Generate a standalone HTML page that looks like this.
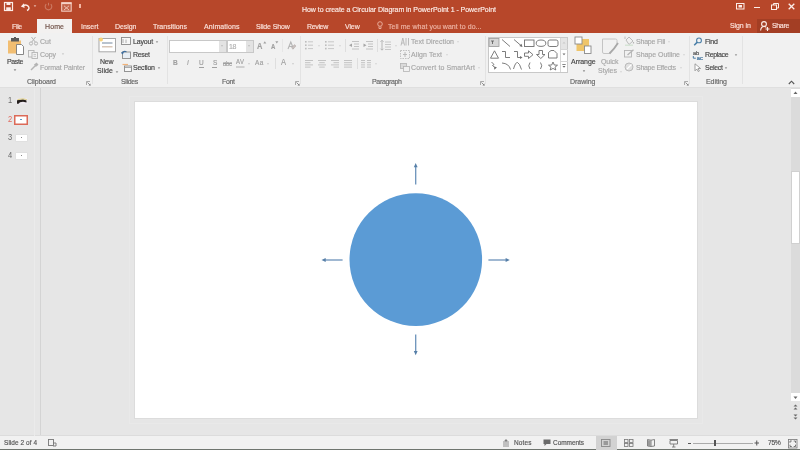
<!DOCTYPE html>
<html><head><meta charset="utf-8"><style>
html,body{margin:0;padding:0;width:800px;height:450px;overflow:hidden;background:#E6E6E6;}
.t{position:absolute;white-space:nowrap;font-family:"Liberation Sans",sans-serif;}
.r{position:absolute;}
svg{overflow:visible}
</style></head><body>
<div class="r" style="left:0px;top:0px;width:800px;height:33px;background:#B7472A;"></div>
<div class="r" style="left:757px;top:19px;width:43px;height:14px;background:#A33E24;"></div>
<div class="r" style="left:37px;top:18.5px;width:35px;height:14.5px;background:#F3F1F0;"></div>
<div class="t" style="left:302.00px;top:6.37px;font-size:7px;line-height:7px;letter-spacing:-0.041px;color:#FCEDE8;-webkit-text-stroke:0.15px #FCEDE8;transform-origin:0 5.93px;transform:scaleY(1.12);will-change:transform;">How to create a Circular Diagram in PowerPoint 1 - PowerPoint</div>
<div class="t" style="left:12.00px;top:22.67px;font-size:7px;line-height:7px;letter-spacing:-0.350px;color:#FBE3DC;-webkit-text-stroke:0.15px #FBE3DC;transform-origin:0 5.93px;transform:scaleY(1.12);will-change:transform;">File</div>
<div class="t" style="left:80.50px;top:22.67px;font-size:7px;line-height:7px;letter-spacing:-0.001px;color:#FBE3DC;-webkit-text-stroke:0.15px #FBE3DC;transform-origin:0 5.93px;transform:scaleY(1.12);will-change:transform;">Insert</div>
<div class="t" style="left:114.50px;top:22.67px;font-size:7px;line-height:7px;letter-spacing:-0.058px;color:#FBE3DC;-webkit-text-stroke:0.15px #FBE3DC;transform-origin:0 5.93px;transform:scaleY(1.12);will-change:transform;">Design</div>
<div class="t" style="left:153.00px;top:22.67px;font-size:7px;line-height:7px;letter-spacing:0.003px;color:#FBE3DC;-webkit-text-stroke:0.15px #FBE3DC;transform-origin:0 5.93px;transform:scaleY(1.12);will-change:transform;">Transitions</div>
<div class="t" style="left:204.00px;top:22.67px;font-size:7px;line-height:7px;letter-spacing:0.097px;color:#FBE3DC;-webkit-text-stroke:0.15px #FBE3DC;transform-origin:0 5.93px;transform:scaleY(1.12);will-change:transform;">Animations</div>
<div class="t" style="left:256.30px;top:22.67px;font-size:7px;line-height:7px;letter-spacing:-0.147px;color:#FBE3DC;-webkit-text-stroke:0.15px #FBE3DC;transform-origin:0 5.93px;transform:scaleY(1.12);will-change:transform;">Slide Show</div>
<div class="t" style="left:307.00px;top:22.67px;font-size:7px;line-height:7px;letter-spacing:-0.350px;color:#FBE3DC;-webkit-text-stroke:0.15px #FBE3DC;transform-origin:0 5.93px;transform:scaleY(1.12);will-change:transform;">Review</div>
<div class="t" style="left:345.30px;top:22.67px;font-size:7px;line-height:7px;letter-spacing:-0.115px;color:#FBE3DC;-webkit-text-stroke:0.15px #FBE3DC;transform-origin:0 5.93px;transform:scaleY(1.12);will-change:transform;">View</div>
<div class="t" style="left:44.50px;top:22.67px;font-size:7px;line-height:7px;letter-spacing:0.109px;color:#6E4F45;-webkit-text-stroke:0.15px #6E4F45;transform-origin:0 5.93px;transform:scaleY(1.12);will-change:transform;">Home</div>
<div class="t" style="left:387.50px;top:22.67px;font-size:7px;line-height:7px;letter-spacing:0.044px;color:#EDB3A3;-webkit-text-stroke:0.15px #EDB3A3;transform-origin:0 5.93px;transform:scaleY(1.12);will-change:transform;">Tell me what you want to do...</div>
<div class="t" style="left:729.80px;top:22.37px;font-size:7px;line-height:7px;letter-spacing:-0.101px;color:#FBE3DC;-webkit-text-stroke:0.15px #FBE3DC;transform-origin:0 5.93px;transform:scaleY(1.12);will-change:transform;">Sign in</div>
<div class="t" style="left:772.00px;top:22.37px;font-size:7px;line-height:7px;letter-spacing:-0.350px;color:#FBE3DC;-webkit-text-stroke:0.15px #FBE3DC;transform-origin:0 5.93px;transform:scaleY(1.12);will-change:transform;">Share</div>
<div class="r" style="left:0px;top:33px;width:800px;height:54px;background:#F1F1F1;"></div>
<div class="r" style="left:0px;top:86.5px;width:800px;height:1px;background:#DFDFDF;"></div>
<div class="r" style="left:92px;top:36px;width:1px;height:48px;background:#E3E3E3;"></div>
<div class="r" style="left:166.5px;top:36px;width:1px;height:48px;background:#E3E3E3;"></div>
<div class="r" style="left:299.5px;top:36px;width:1px;height:48px;background:#E3E3E3;"></div>
<div class="r" style="left:484.5px;top:36px;width:1px;height:48px;background:#E3E3E3;"></div>
<div class="r" style="left:688.5px;top:36px;width:1px;height:48px;background:#E3E3E3;"></div>
<div class="r" style="left:742px;top:36px;width:1px;height:48px;background:#E3E3E3;"></div>
<div class="t" style="left:6.70px;top:57.87px;font-size:7px;line-height:7px;letter-spacing:-0.350px;color:#444444;-webkit-text-stroke:0.15px #444444;transform-origin:0 5.93px;transform:scaleY(1.12);will-change:transform;">Paste</div>
<div class="t" style="left:39.70px;top:38.27px;font-size:7px;line-height:7px;letter-spacing:0.053px;color:#A6A6A6;-webkit-text-stroke:0.15px #A6A6A6;transform-origin:0 5.93px;transform:scaleY(1.12);will-change:transform;">Cut</div>
<div class="t" style="left:40.00px;top:51.27px;font-size:7px;line-height:7px;letter-spacing:-0.114px;color:#A6A6A6;-webkit-text-stroke:0.15px #A6A6A6;transform-origin:0 5.93px;transform:scaleY(1.12);will-change:transform;">Copy</div>
<div class="t" style="left:40.00px;top:64.27px;font-size:7px;line-height:7px;letter-spacing:-0.099px;color:#A6A6A6;-webkit-text-stroke:0.15px #A6A6A6;transform-origin:0 5.93px;transform:scaleY(1.12);will-change:transform;">Format Painter</div>
<div class="t" style="left:100.40px;top:58.27px;font-size:7px;line-height:7px;letter-spacing:-0.202px;color:#444444;-webkit-text-stroke:0.15px #444444;transform-origin:0 5.93px;transform:scaleY(1.12);will-change:transform;">New</div>
<div class="t" style="left:97.00px;top:67.27px;font-size:7px;line-height:7px;letter-spacing:0.109px;color:#444444;-webkit-text-stroke:0.15px #444444;transform-origin:0 5.93px;transform:scaleY(1.12);will-change:transform;">Slide</div>
<div class="t" style="left:132.70px;top:38.27px;font-size:7px;line-height:7px;letter-spacing:-0.143px;color:#444444;-webkit-text-stroke:0.15px #444444;transform-origin:0 5.93px;transform:scaleY(1.12);will-change:transform;">Layout</div>
<div class="t" style="left:133.00px;top:51.27px;font-size:7px;line-height:7px;letter-spacing:-0.350px;color:#444444;-webkit-text-stroke:0.15px #444444;transform-origin:0 5.93px;transform:scaleY(1.12);will-change:transform;">Reset</div>
<div class="t" style="left:133.00px;top:64.27px;font-size:7px;line-height:7px;letter-spacing:-0.225px;color:#444444;-webkit-text-stroke:0.15px #444444;transform-origin:0 5.93px;transform:scaleY(1.12);will-change:transform;">Section</div>
<div class="t" style="left:411.00px;top:38.27px;font-size:7px;line-height:7px;letter-spacing:0.046px;color:#A6A6A6;-webkit-text-stroke:0.15px #A6A6A6;transform-origin:0 5.93px;transform:scaleY(1.12);will-change:transform;">Text Direction</div>
<div class="t" style="left:411.00px;top:51.27px;font-size:7px;line-height:7px;letter-spacing:0.086px;color:#A6A6A6;-webkit-text-stroke:0.15px #A6A6A6;transform-origin:0 5.93px;transform:scaleY(1.12);will-change:transform;">Align Text</div>
<div class="t" style="left:411.00px;top:64.27px;font-size:7px;line-height:7px;letter-spacing:0.119px;color:#A6A6A6;-webkit-text-stroke:0.15px #A6A6A6;transform-origin:0 5.93px;transform:scaleY(1.12);will-change:transform;">Convert to SmartArt</div>
<div class="t" style="left:571.00px;top:58.27px;font-size:7px;line-height:7px;letter-spacing:-0.034px;color:#444444;-webkit-text-stroke:0.15px #444444;transform-origin:0 5.93px;transform:scaleY(1.12);will-change:transform;">Arrange</div>
<div class="t" style="left:601.00px;top:58.27px;font-size:7px;line-height:7px;letter-spacing:-0.098px;color:#A6A6A6;-webkit-text-stroke:0.15px #A6A6A6;transform-origin:0 5.93px;transform:scaleY(1.12);will-change:transform;">Quick</div>
<div class="t" style="left:598.00px;top:67.27px;font-size:7px;line-height:7px;letter-spacing:-0.012px;color:#A6A6A6;-webkit-text-stroke:0.15px #A6A6A6;transform-origin:0 5.93px;transform:scaleY(1.12);will-change:transform;">Styles</div>
<div class="t" style="left:635.70px;top:38.27px;font-size:7px;line-height:7px;letter-spacing:-0.203px;color:#A6A6A6;-webkit-text-stroke:0.15px #A6A6A6;transform-origin:0 5.93px;transform:scaleY(1.12);will-change:transform;">Shape Fill</div>
<div class="t" style="left:636.00px;top:51.27px;font-size:7px;line-height:7px;letter-spacing:-0.030px;color:#A6A6A6;-webkit-text-stroke:0.15px #A6A6A6;transform-origin:0 5.93px;transform:scaleY(1.12);will-change:transform;">Shape Outline</div>
<div class="t" style="left:636.00px;top:64.27px;font-size:7px;line-height:7px;letter-spacing:-0.288px;color:#A6A6A6;-webkit-text-stroke:0.15px #A6A6A6;transform-origin:0 5.93px;transform:scaleY(1.12);will-change:transform;">Shape Effects</div>
<div class="t" style="left:704.70px;top:38.27px;font-size:7px;line-height:7px;letter-spacing:-0.272px;color:#444444;-webkit-text-stroke:0.15px #444444;transform-origin:0 5.93px;transform:scaleY(1.12);will-change:transform;">Find</div>
<div class="t" style="left:704.70px;top:51.27px;font-size:7px;line-height:7px;letter-spacing:-0.347px;color:#444444;-webkit-text-stroke:0.15px #444444;transform-origin:0 5.93px;transform:scaleY(1.12);will-change:transform;">Replace</div>
<div class="t" style="left:704.70px;top:64.27px;font-size:7px;line-height:7px;letter-spacing:-0.291px;color:#444444;-webkit-text-stroke:0.15px #444444;transform-origin:0 5.93px;transform:scaleY(1.12);will-change:transform;">Select</div>
<div class="t" style="left:27.00px;top:78.37px;font-size:7px;line-height:7px;letter-spacing:-0.120px;color:#666666;-webkit-text-stroke:0.15px #666666;transform-origin:0 5.93px;transform:scaleY(1.12);will-change:transform;">Clipboard</div>
<div class="t" style="left:121.00px;top:78.37px;font-size:7px;line-height:7px;letter-spacing:-0.350px;color:#666666;-webkit-text-stroke:0.15px #666666;transform-origin:0 5.93px;transform:scaleY(1.12);will-change:transform;">Slides</div>
<div class="t" style="left:222.00px;top:78.37px;font-size:7px;line-height:7px;letter-spacing:-0.336px;color:#666666;-webkit-text-stroke:0.15px #666666;transform-origin:0 5.93px;transform:scaleY(1.12);will-change:transform;">Font</div>
<div class="t" style="left:372.00px;top:78.37px;font-size:7px;line-height:7px;letter-spacing:-0.336px;color:#666666;-webkit-text-stroke:0.15px #666666;transform-origin:0 5.93px;transform:scaleY(1.12);will-change:transform;">Paragraph</div>
<div class="t" style="left:569.50px;top:78.37px;font-size:7px;line-height:7px;letter-spacing:-0.029px;color:#666666;-webkit-text-stroke:0.15px #666666;transform-origin:0 5.93px;transform:scaleY(1.12);will-change:transform;">Drawing</div>
<div class="t" style="left:705.50px;top:78.37px;font-size:7px;line-height:7px;letter-spacing:-0.067px;color:#666666;-webkit-text-stroke:0.15px #666666;transform-origin:0 5.93px;transform:scaleY(1.12);will-change:transform;">Editing</div>
<div class="r" style="left:0px;top:88px;width:800px;height:348px;background:#E6E6E6;"></div>
<div class="r" style="left:40px;top:88px;width:1px;height:348px;background:#D4D4D4;"></div>
<div class="r" style="left:135px;top:102px;width:562px;height:316px;background:#FFFFFF;box-shadow:0 0 0 1px #DCDCDC, 0 0 0 5px #E6E6E6, 0 0 0 6px #E9E9E9;"></div>
<div class="r" style="left:0px;top:436px;width:800px;height:14px;background:#F1F1F1;"></div>
<div class="r" style="left:0px;top:434.5px;width:800px;height:1.5px;background:#DCDCDC;"></div>
<div class="r" style="left:0px;top:448.5px;width:800px;height:1.5px;background:#6E746E;"></div>
<div class="t" style="left:4.00px;top:440.49px;font-size:6.5px;line-height:6.5px;letter-spacing:0.043px;color:#555;-webkit-text-stroke:0.15px #555;transform-origin:0 5.51px;transform:scaleY(1.12);will-change:transform;">Slide 2 of 4</div>
<div class="t" style="left:513.60px;top:440.29px;font-size:6.5px;line-height:6.5px;letter-spacing:0.105px;color:#555;-webkit-text-stroke:0.15px #555;transform-origin:0 5.51px;transform:scaleY(1.12);will-change:transform;">Notes</div>
<div class="t" style="left:553.00px;top:440.29px;font-size:6.5px;line-height:6.5px;letter-spacing:-0.061px;color:#555;-webkit-text-stroke:0.15px #555;transform-origin:0 5.51px;transform:scaleY(1.12);will-change:transform;">Comments</div>
<div class="t" style="left:768.00px;top:440.04px;font-size:6.8px;line-height:6.8px;letter-spacing:-0.350px;color:#555;-webkit-text-stroke:0.15px #555;transform-origin:0 5.76px;transform:scaleY(1.12);will-change:transform;">75%</div>
<svg class="r" style="left:4px;top:2px" width="10" height="9" viewBox="0 0 10 9"><rect x="0.5" y="0.5" width="8" height="8" fill="none" stroke="#FCEDE8" stroke-width="1.2"/><rect x="2.5" y="0.5" width="4" height="2.5" fill="#FCEDE8"/><rect x="2.2" y="5.3" width="4.6" height="3.2" fill="#FCEDE8"/></svg>
<svg class="r" style="left:20px;top:2px" width="11" height="9" viewBox="0 0 11 9"><path d="M2.5 4.2 Q6 1.5 8.5 4.5 Q10 7 7 8.5" fill="none" stroke="#FCEDE8" stroke-width="1.4"/><path d="M0.8 4.5 L4 1.2 L4.6 6 Z" fill="#FCEDE8"/></svg>
<svg class="r" style="left:32.5px;top:5px" width="4" height="3" viewBox="0 0 4 3"><path d="M0.7 0.5 L3.3 0.5 L2 1.8 Z" fill="#FCEDE8"/></svg>
<svg class="r" style="left:44px;top:2px" width="9" height="9" viewBox="0 0 9 9"><path d="M2.2 2.2 A3.3 3.3 0 1 0 6.8 2.2" fill="none" stroke="#CC7A63" stroke-width="1.1"/><path d="M4.5 0.8 L4.5 3.5" stroke="#CC7A63" stroke-width="1"/></svg>
<svg class="r" style="left:61px;top:1.5px" width="11" height="10" viewBox="0 0 11 10"><rect x="0.7" y="0.7" width="9.5" height="8.5" fill="#C4634A" stroke="#F6D2C6" stroke-width="1"/><rect x="0.5" y="0.5" width="10" height="1.6" fill="#F6D2C6"/><path d="M3 3.8 L8 8 M8 3.8 L3 8" stroke="#EFC2B2" stroke-width="1"/></svg>
<div class="r" style="left:78.8px;top:4px;width:2.4px;height:4px;background:#F3B6A2;"></div>
<svg class="r" style="left:736px;top:3px" width="9" height="7" viewBox="0 0 9 7"><rect x="0.5" y="0.5" width="7.5" height="5.5" fill="none" stroke="#FCEDE8" stroke-width="1"/><rect x="2.5" y="2" width="3.5" height="2.5" fill="#FCEDE8"/></svg>
<div class="r" style="left:754px;top:7px;width:6px;height:1.2px;background:#FCEDE8;"></div>
<svg class="r" style="left:771px;top:3px" width="8" height="7" viewBox="0 0 8 7"><rect x="0.5" y="2" width="5" height="4.5" fill="none" stroke="#FCEDE8" stroke-width="1"/><path d="M2.5 2 L2.5 0.5 L7.5 0.5 L7.5 5 L5.5 5" fill="none" stroke="#FCEDE8" stroke-width="1"/></svg>
<svg class="r" style="left:788px;top:3px" width="7" height="7" viewBox="0 0 7 7"><path d="M0.7 0.7 L6.3 6.3 M6.3 0.7 L0.7 6.3" stroke="#FCEDE8" stroke-width="1.3"/></svg>
<svg class="r" style="left:377px;top:21px" width="6" height="9" viewBox="0 0 6 9"><circle cx="3" cy="3" r="2.3" fill="none" stroke="#EDB3A3" stroke-width="0.9"/><path d="M2 5.5 L2 7.5 L4 7.5 L4 5.5" fill="none" stroke="#EDB3A3" stroke-width="0.9"/></svg>
<svg class="r" style="left:760px;top:21px" width="10" height="10" viewBox="0 0 10 10"><circle cx="4" cy="3" r="2.4" fill="none" stroke="#FCEDE8" stroke-width="1.1"/><path d="M0.6 9.5 Q1 5.5 4 5.5 Q5.5 5.5 6.3 6.3" fill="none" stroke="#FCEDE8" stroke-width="1.1"/><path d="M7.5 6 L7.5 10 M5.5 8 L9.5 8" stroke="#FCEDE8" stroke-width="1.1"/></svg>
<svg class="r" style="left:7px;top:37px" width="18" height="19" viewBox="0 0 18 19"><rect x="1" y="3.5" width="13" height="13" fill="#F2BE72"/><rect x="4" y="1" width="8" height="3.5" fill="#5A5A5A"/><rect x="7" y="0" width="2" height="1.5" fill="#5A5A5A"/><path d="M9.5 7.5 L14.5 7.5 L16.5 9.5 L16.5 17.5 L9.5 17.5 Z" fill="#FFFFFF" stroke="#7A7A7A" stroke-width="0.9"/></svg>
<svg class="r" style="left:12.5px;top:69px" width="4" height="3" viewBox="0 0 4 3"><path d="M0.7 0.5 L3.3 0.5 L2 1.8 Z" fill="#555"/></svg>
<svg class="r" style="left:29px;top:37px" width="9" height="9" viewBox="0 0 9 9"><circle cx="2" cy="6.5" r="1.6" fill="none" stroke="#B4B4B4" stroke-width="1"/><circle cx="7" cy="6.5" r="1.6" fill="none" stroke="#B4B4B4" stroke-width="1"/><path d="M2.8 5 L6.5 0 M6.2 5 L2.5 0" stroke="#B4B4B4" stroke-width="1"/></svg>
<svg class="r" style="left:28px;top:50px" width="11" height="9" viewBox="0 0 11 9"><rect x="0.5" y="0.5" width="5.5" height="6.5" fill="none" stroke="#B4B4B4" stroke-width="0.9"/><rect x="4" y="2.5" width="5.5" height="6" fill="#F1F1F1" stroke="#B4B4B4" stroke-width="0.9"/><path d="M5.5 4.5 L8 4.5 M5.5 6.3 L8 6.3" stroke="#B4B4B4" stroke-width="0.7"/></svg>
<svg class="r" style="left:61px;top:52.5px" width="4" height="3" viewBox="0 0 4 3"><path d="M0.8 0.5 L3.2 0.5 L2 1.7 Z" fill="#B8B8B8"/></svg>
<svg class="r" style="left:30px;top:63px" width="9" height="8" viewBox="0 0 9 8"><path d="M1 7 L5 3" stroke="#B4B4B4" stroke-width="1.5"/><rect x="4.5" y="0.5" width="3.5" height="3" transform="rotate(-40 6 2)" fill="#B4B4B4"/></svg>
<svg class="r" style="left:86px;top:80.5px" width="5" height="5" viewBox="0 0 5 5"><path d="M0.5 0.5 L4 0.5 M0.5 0.5 L0.5 4" stroke="#9A9A9A" stroke-width="0.8"/><path d="M1.5 1.5 L4.3 4.3" stroke="#7A7A7A" stroke-width="0.8"/><path d="M4.5 2.5 L4.5 4.5 L2.5 4.5 Z" fill="#7A7A7A"/></svg>
<svg class="r" style="left:295px;top:80.5px" width="5" height="5" viewBox="0 0 5 5"><path d="M0.5 0.5 L4 0.5 M0.5 0.5 L0.5 4" stroke="#9A9A9A" stroke-width="0.8"/><path d="M1.5 1.5 L4.3 4.3" stroke="#7A7A7A" stroke-width="0.8"/><path d="M4.5 2.5 L4.5 4.5 L2.5 4.5 Z" fill="#7A7A7A"/></svg>
<svg class="r" style="left:480px;top:80.5px" width="5" height="5" viewBox="0 0 5 5"><path d="M0.5 0.5 L4 0.5 M0.5 0.5 L0.5 4" stroke="#9A9A9A" stroke-width="0.8"/><path d="M1.5 1.5 L4.3 4.3" stroke="#7A7A7A" stroke-width="0.8"/><path d="M4.5 2.5 L4.5 4.5 L2.5 4.5 Z" fill="#7A7A7A"/></svg>
<svg class="r" style="left:684px;top:80.5px" width="5" height="5" viewBox="0 0 5 5"><path d="M0.5 0.5 L4 0.5 M0.5 0.5 L0.5 4" stroke="#9A9A9A" stroke-width="0.8"/><path d="M1.5 1.5 L4.3 4.3" stroke="#7A7A7A" stroke-width="0.8"/><path d="M4.5 2.5 L4.5 4.5 L2.5 4.5 Z" fill="#7A7A7A"/></svg>
<svg class="r" style="left:98px;top:37px" width="19" height="16" viewBox="0 0 19 16"><rect x="1" y="1.5" width="16.5" height="13.3" fill="#FFFFFF" stroke="#A8A8A8" stroke-width="1"/><rect x="4" y="5" width="10.5" height="2" fill="#B9C3CE"/><rect x="4" y="9" width="10.5" height="1.5" fill="#D9C7B8"/><circle cx="3" cy="2.5" r="2" fill="#F6D27A"/></svg>
<svg class="r" style="left:114.5px;top:70.5px" width="4" height="3" viewBox="0 0 4 3"><path d="M0.7 0.5 L3.3 0.5 L2 1.8 Z" fill="#666"/></svg>
<svg class="r" style="left:121px;top:37px" width="10" height="8" viewBox="0 0 10 8"><rect x="0.5" y="0.5" width="9" height="7" fill="#F7F7F7" stroke="#8A8A8A" stroke-width="0.9"/><path d="M5 2.5 L5 6 M2 2 L2 6" stroke="#A0A0A0" stroke-width="0.8"/></svg>
<svg class="r" style="left:154.5px;top:40.5px" width="4" height="3" viewBox="0 0 4 3"><path d="M0.8 0.5 L3.2 0.5 L2 1.7 Z" fill="#666"/></svg>
<svg class="r" style="left:121px;top:50px" width="10" height="9" viewBox="0 0 10 9"><rect x="1.5" y="2" width="8" height="6.5" fill="#E7EEF5" stroke="#8A8A8A" stroke-width="0.9"/><path d="M1 3.5 Q2.5 0.5 5.5 1.8" fill="none" stroke="#3F6F9F" stroke-width="1.1"/><path d="M0 2 L1.2 4.5 L3 2.8 Z" fill="#3F6F9F"/></svg>
<svg class="r" style="left:122px;top:63px" width="10" height="9" viewBox="0 0 10 9"><rect x="2.5" y="3" width="7" height="5.5" fill="#F7F7F7" stroke="#8A8A8A" stroke-width="0.9"/><path d="M0.5 1.5 L6 1.5" stroke="#F2B37A" stroke-width="1.2"/><path d="M2.5 4.5 L9.5 4.5" stroke="#8A8A8A" stroke-width="0.7"/></svg>
<svg class="r" style="left:156.5px;top:66.5px" width="4" height="3" viewBox="0 0 4 3"><path d="M0.8 0.5 L3.2 0.5 L2 1.7 Z" fill="#666"/></svg>
<div class="r" style="left:169px;top:39.5px;width:57.5px;height:13px;background:#FFFFFF;box-shadow:inset 0 0 0 1px #C8C8C8;"></div>
<div class="r" style="left:218.5px;top:40.5px;width:7px;height:11px;background:#E3E3E3;"></div>
<svg class="r" style="left:220px;top:45px" width="4" height="3" viewBox="0 0 4 3"><path d="M0.8999999999999999 0.5 L3.1 0.5 L2 1.6 Z" fill="#A0A0A0"/></svg>
<div class="r" style="left:226.5px;top:39.5px;width:27px;height:13px;background:#FFFFFF;box-shadow:inset 0 0 0 1px #C8C8C8;"></div>
<div class="r" style="left:246px;top:40.5px;width:6.5px;height:11px;background:#E3E3E3;"></div>
<svg class="r" style="left:247.3px;top:45px" width="4" height="3" viewBox="0 0 4 3"><path d="M0.8999999999999999 0.5 L3.1 0.5 L2 1.6 Z" fill="#A0A0A0"/></svg>
<div class="t" style="left:228.80px;top:43.07px;font-size:7px;line-height:7px;letter-spacing:-0.350px;color:#B0B0B0;-webkit-text-stroke:0.15px #B0B0B0;transform-origin:0 5.93px;transform:scaleY(1.12);will-change:transform;">18</div>
<div class="t" style="left:257.30px;top:42.85px;font-size:7.5px;line-height:7.5px;letter-spacing:-0.116px;color:#A0A0A0;-webkit-text-stroke:0.15px #A0A0A0;transform-origin:0 6.35px;transform:scaleY(1.12);will-change:transform;font-weight:bold;">A</div>
<svg class="r" style="left:262.5px;top:41px" width="4" height="3" viewBox="0 0 4 3"><path d="M0.3 2.6 L1.8 0.3 L3.3 2.6 Z" fill="#A0A0A0"/></svg>
<div class="t" style="left:270.60px;top:44.12px;font-size:6px;line-height:6px;letter-spacing:0.067px;color:#A0A0A0;-webkit-text-stroke:0.15px #A0A0A0;transform-origin:0 5.08px;transform:scaleY(1.12);will-change:transform;font-weight:bold;">A</div>
<svg class="r" style="left:275px;top:41px" width="4" height="3" viewBox="0 0 4 3"><path d="M0.3 0.3 L3.3 0.3 L1.8 2.6 Z" fill="#A0A0A0"/></svg>
<div class="r" style="left:282px;top:39px;width:1px;height:13px;background:#E6E6E6;"></div>
<svg class="r" style="left:287px;top:41px" width="9" height="9" viewBox="0 0 9 9"><path d="M1 8 L3.8 1 L6.6 8 M2 5.5 L5.6 5.5" fill="none" stroke="#B4B4B4" stroke-width="1.1"/><path d="M4.5 6.8 L7.5 3.6 L9 5 L6 8.2 Z" fill="#C8C0BE" stroke="#B0A8A6" stroke-width="0.5"/></svg>
<div class="t" style="left:173.20px;top:60.19px;font-size:6.5px;line-height:6.5px;letter-spacing:-0.294px;color:#A0A0A0;-webkit-text-stroke:0.15px #A0A0A0;transform-origin:0 5.51px;transform:scaleY(1.12);will-change:transform;font-weight:bold;">B</div>
<div class="t" style="left:187.00px;top:60.19px;font-size:6.5px;line-height:6.5px;letter-spacing:0.194px;color:#A0A0A0;-webkit-text-stroke:0.15px #A0A0A0;transform-origin:0 5.51px;transform:scaleY(1.12);will-change:transform;font-style:italic;">I</div>
<div class="t" style="left:199.00px;top:60.19px;font-size:6.5px;line-height:6.5px;letter-spacing:-0.350px;color:#A0A0A0;-webkit-text-stroke:0.15px #A0A0A0;transform-origin:0 5.51px;transform:scaleY(1.12);will-change:transform;">U</div>
<div class="r" style="left:199px;top:67px;width:4.5px;height:0.8px;background:#A0A0A0;"></div>
<div class="t" style="left:212.50px;top:60.19px;font-size:6.5px;line-height:6.5px;letter-spacing:-0.350px;color:#A0A0A0;-webkit-text-stroke:0.15px #A0A0A0;transform-origin:0 5.51px;transform:scaleY(1.12);will-change:transform;">S</div>
<div class="r" style="left:212px;top:67px;width:5px;height:0.8px;background:#A0A0A0;"></div>
<div class="t" style="left:223.00px;top:60.62px;font-size:6px;line-height:6px;letter-spacing:-0.350px;color:#A0A0A0;-webkit-text-stroke:0.15px #A0A0A0;transform-origin:0 5.08px;transform:scaleY(1.12);will-change:transform;">abc</div>
<div class="r" style="left:222.5px;top:63.3px;width:9.5px;height:0.8px;background:#A0A0A0;"></div>
<div class="t" style="left:236.00px;top:59.42px;font-size:6px;line-height:6px;letter-spacing:0.350px;color:#A0A0A0;-webkit-text-stroke:0.15px #A0A0A0;transform-origin:0 5.08px;transform:scaleY(1.12);will-change:transform;">AV</div>
<svg class="r" style="left:236px;top:65.5px" width="9" height="2" viewBox="0 0 9 2"><path d="M0 1 L8.5 1" stroke="#A0A0A0" stroke-width="0.8"/></svg>
<svg class="r" style="left:247px;top:62.5px" width="4" height="3" viewBox="0 0 4 3"><path d="M0.8999999999999999 0.5 L3.1 0.5 L2 1.6 Z" fill="#B0B0B0"/></svg>
<div class="t" style="left:255.00px;top:60.19px;font-size:6.5px;line-height:6.5px;letter-spacing:0.350px;color:#A0A0A0;-webkit-text-stroke:0.15px #A0A0A0;transform-origin:0 5.51px;transform:scaleY(1.12);will-change:transform;">Aa</div>
<svg class="r" style="left:265.5px;top:62.5px" width="4" height="3" viewBox="0 0 4 3"><path d="M0.8999999999999999 0.5 L3.1 0.5 L2 1.6 Z" fill="#B0B0B0"/></svg>
<div class="r" style="left:275px;top:58px;width:1px;height:11px;background:#DEDEDE;"></div>
<div class="t" style="left:281.00px;top:59.35px;font-size:7.5px;line-height:7.5px;letter-spacing:0.350px;color:#A0A0A0;-webkit-text-stroke:0.15px #A0A0A0;transform-origin:0 6.35px;transform:scaleY(1.12);will-change:transform;">A</div>
<svg class="r" style="left:291px;top:62.5px" width="4" height="3" viewBox="0 0 4 3"><path d="M0.8999999999999999 0.5 L3.1 0.5 L2 1.6 Z" fill="#B0B0B0"/></svg>
<svg class="r" style="left:305px;top:41px" width="9" height="12" viewBox="0 0 9 12"><rect x="0" y="0.0" width="1.6" height="1.6" fill="#BDBDBD"/><path d="M3 0.8 L8 0.8" stroke="#BDBDBD" stroke-width="0.8"/><rect x="0" y="3.4" width="1.6" height="1.6" fill="#BDBDBD"/><path d="M3 4.2 L8 4.2" stroke="#BDBDBD" stroke-width="0.8"/><rect x="0" y="6.8" width="1.6" height="1.6" fill="#BDBDBD"/><path d="M3 7.6 L8 7.6" stroke="#BDBDBD" stroke-width="0.8"/></svg>
<svg class="r" style="left:317px;top:44.5px" width="4" height="3" viewBox="0 0 4 3"><path d="M0.8999999999999999 0.5 L3.1 0.5 L2 1.6 Z" fill="#C0C0C0"/></svg>
<svg class="r" style="left:325px;top:41px" width="10" height="12" viewBox="0 0 10 12"><rect x="0" y="0.0" width="1.6" height="1.6" fill="#BDBDBD"/><path d="M3 0.8 L9 0.8" stroke="#BDBDBD" stroke-width="0.8"/><rect x="0" y="3.4" width="1.6" height="1.6" fill="#BDBDBD"/><path d="M3 4.2 L9 4.2" stroke="#BDBDBD" stroke-width="0.8"/><rect x="0" y="6.8" width="1.6" height="1.6" fill="#BDBDBD"/><path d="M3 7.6 L9 7.6" stroke="#BDBDBD" stroke-width="0.8"/></svg>
<svg class="r" style="left:337.5px;top:44.5px" width="4" height="3" viewBox="0 0 4 3"><path d="M0.8999999999999999 0.5 L3.1 0.5 L2 1.6 Z" fill="#C0C0C0"/></svg>
<div class="r" style="left:345px;top:39px;width:1px;height:13px;background:#DEDEDE;"></div>
<svg class="r" style="left:349px;top:41px" width="10" height="9" viewBox="0 0 10 9"><path d="M3 0.5 L10 0.5 M5 3 L10 3 M5 5.5 L10 5.5 M3 8 L10 8" stroke="#BDBDBD" stroke-width="0.9"/><path d="M0 4.2 L3 2.5 L3 6 Z" fill="#A5A5A5"/></svg>
<svg class="r" style="left:363px;top:41px" width="10" height="9" viewBox="0 0 10 9"><path d="M3 0.5 L10 0.5 M5 3 L10 3 M5 5.5 L10 5.5 M3 8 L10 8" stroke="#BDBDBD" stroke-width="0.9"/><path d="M3.5 4.2 L0.5 2.5 L0.5 6 Z" fill="#A5A5A5"/></svg>
<div class="r" style="left:376.5px;top:39px;width:1px;height:13px;background:#DEDEDE;"></div>
<svg class="r" style="left:380px;top:40px" width="12" height="11" viewBox="0 0 12 11"><path d="M2 0.5 L2 10 M0.5 1.8 L2 0.3 L3.5 1.8 M0.5 8.7 L2 10.2 L3.5 8.7" fill="none" stroke="#B0B0B0" stroke-width="0.9"/><path d="M5 2 L11 2 M5 4.5 L11 4.5 M5 7 L11 7 M5 9.5 L11 9.5" stroke="#BDBDBD" stroke-width="0.8"/></svg>
<svg class="r" style="left:393.5px;top:44.5px" width="4" height="3" viewBox="0 0 4 3"><path d="M0.8999999999999999 0.5 L3.1 0.5 L2 1.6 Z" fill="#C0C0C0"/></svg>
<svg class="r" style="left:305px;top:60px" width="9" height="9" viewBox="0 0 9 9"><path d="M0 0.5 L8 0.5" stroke="#BDBDBD" stroke-width="0.9"/><path d="M0 2.7 L5.5 2.7" stroke="#BDBDBD" stroke-width="0.9"/><path d="M0 4.9 L8 4.9" stroke="#BDBDBD" stroke-width="0.9"/><path d="M0 7.1000000000000005 L5.5 7.1000000000000005" stroke="#BDBDBD" stroke-width="0.9"/></svg>
<svg class="r" style="left:318px;top:60px" width="9" height="9" viewBox="0 0 9 9"><path d="M0.0 0.5 L8.0 0.5" stroke="#BDBDBD" stroke-width="0.9"/><path d="M1.25 2.7 L6.75 2.7" stroke="#BDBDBD" stroke-width="0.9"/><path d="M0.0 4.9 L8.0 4.9" stroke="#BDBDBD" stroke-width="0.9"/><path d="M1.25 7.1000000000000005 L6.75 7.1000000000000005" stroke="#BDBDBD" stroke-width="0.9"/></svg>
<svg class="r" style="left:331px;top:60px" width="9" height="9" viewBox="0 0 9 9"><path d="M0 0.5 L8 0.5" stroke="#BDBDBD" stroke-width="0.9"/><path d="M2.5 2.7 L8.0 2.7" stroke="#BDBDBD" stroke-width="0.9"/><path d="M0 4.9 L8 4.9" stroke="#BDBDBD" stroke-width="0.9"/><path d="M2.5 7.1000000000000005 L8.0 7.1000000000000005" stroke="#BDBDBD" stroke-width="0.9"/></svg>
<svg class="r" style="left:344px;top:60px" width="9" height="9" viewBox="0 0 9 9"><path d="M0 0.5 L8 0.5" stroke="#BDBDBD" stroke-width="0.9"/><path d="M0 2.7 L8 2.7" stroke="#BDBDBD" stroke-width="0.9"/><path d="M0 4.9 L8 4.9" stroke="#BDBDBD" stroke-width="0.9"/><path d="M0 7.1000000000000005 L8 7.1000000000000005" stroke="#BDBDBD" stroke-width="0.9"/></svg>
<div class="r" style="left:357px;top:58px;width:1px;height:11px;background:#DEDEDE;"></div>
<svg class="r" style="left:361px;top:60px" width="10" height="9" viewBox="0 0 10 9"><path d="M0 0.5 L4 0.5 M0 2.7 L4 2.7 M0 4.9 L4 4.9 M0 7.1 L4 7.1 M6 0.5 L10 0.5 M6 2.7 L10 2.7 M6 4.9 L10 4.9 M6 7.1 L10 7.1" stroke="#BDBDBD" stroke-width="0.9"/></svg>
<svg class="r" style="left:373.5px;top:62.5px" width="4" height="3" viewBox="0 0 4 3"><path d="M0.8999999999999999 0.5 L3.1 0.5 L2 1.6 Z" fill="#C0C0C0"/></svg>
<svg class="r" style="left:400px;top:37px" width="10" height="9" viewBox="0 0 10 9"><path d="M1 8.5 L2.8 1 L4.6 8.5 M1.7 6 L3.9 6" fill="none" stroke="#B4B4B4" stroke-width="0.9"/><path d="M6 1 L6 8.5 M8.5 1 L8.5 8.5" stroke="#B4B4B4" stroke-width="0.9"/></svg>
<svg class="r" style="left:455.5px;top:40.5px" width="4" height="3" viewBox="0 0 4 3"><path d="M0.8999999999999999 0.5 L3.1 0.5 L2 1.6 Z" fill="#C0C0C0"/></svg>
<svg class="r" style="left:400px;top:50px" width="10" height="9" viewBox="0 0 10 9"><rect x="0.5" y="0.5" width="9" height="8" fill="none" stroke="#B4B4B4" stroke-width="0.8" stroke-dasharray="1.5 1"/><path d="M3 4.5 L7 4.5 M5 2 L5 7" stroke="#B4B4B4" stroke-width="0.9"/></svg>
<svg class="r" style="left:444.5px;top:53.5px" width="4" height="3" viewBox="0 0 4 3"><path d="M0.8999999999999999 0.5 L3.1 0.5 L2 1.6 Z" fill="#C0C0C0"/></svg>
<svg class="r" style="left:400px;top:63px" width="11" height="9" viewBox="0 0 11 9"><rect x="0.5" y="0.5" width="6" height="5" fill="#DADADA" stroke="#B4B4B4" stroke-width="0.8"/><rect x="3.5" y="3.5" width="6" height="5" fill="#F1F1F1" stroke="#B4B4B4" stroke-width="0.8"/></svg>
<svg class="r" style="left:476.5px;top:66.5px" width="4" height="3" viewBox="0 0 4 3"><path d="M0.8999999999999999 0.5 L3.1 0.5 L2 1.6 Z" fill="#C0C0C0"/></svg>
<div class="r" style="left:488px;top:36.5px;width:80px;height:36px;background:#FFFFFF;box-shadow:inset 0 0 0 1px #C8C8C8;"></div>
<div class="r" style="left:559.5px;top:37.5px;width:7.5px;height:11px;background:#E4E4E4;"></div>
<div class="r" style="left:559.5px;top:37.5px;width:1px;height:34px;background:#D6D6D6;"></div>
<div class="r" style="left:560px;top:48.5px;width:7.5px;height:1px;background:#D6D6D6;"></div>
<div class="r" style="left:560px;top:60.5px;width:7.5px;height:1px;background:#D6D6D6;"></div>
<svg class="r" style="left:561.5px;top:41px" width="4" height="3" viewBox="0 0 4 3"><path d="M0.5 2.5 L2 0.8 L3.5 2.5 Z" fill="#C8C8C8"/></svg>
<svg class="r" style="left:561.5px;top:53px" width="4" height="3" viewBox="0 0 4 3"><path d="M0.5 0.5 L3.5 0.5 L2 2.3 Z" fill="#6A6A6A"/></svg>
<svg class="r" style="left:561.5px;top:64px" width="4" height="5" viewBox="0 0 4 5"><path d="M0.3 0.5 L3.7 0.5" stroke="#6A6A6A" stroke-width="0.8"/><path d="M0.5 2 L3.5 2 L2 3.8 Z" fill="#6A6A6A"/></svg>
<svg class="r" style="left:0;top:0" width="800" height="90"><rect x="489" y="38.5" width="10" height="8" fill="#D7D7D7" stroke="#9A9A9A" stroke-width="0.8"/><path d="M491 41 L494 41 M492.5 41 L492.5 44" stroke="#555" stroke-width="0.8"/><path d="M502 39.5 L510 46.5" stroke="#6E6E6E" stroke-width="0.9" fill="none"/><path d="M514 39.5 L521.5 46" stroke="#6E6E6E" stroke-width="0.9" fill="none"/><path d="M522.5 47 L519.3 46 L521.5 43.8 Z" fill="#6E6E6E"/><rect x="524.5" y="40" width="9.5" height="6.5" stroke="#6E6E6E" stroke-width="0.9" fill="none"/><ellipse cx="541" cy="43.2" rx="4.8" ry="3.2" stroke="#6E6E6E" stroke-width="0.9" fill="none"/><rect x="548" y="40" width="10" height="6.5" rx="1.8" stroke="#6E6E6E" stroke-width="0.9" fill="none"/><path d="M494.5 50.8 L498.5 58.2 L490.5 58.2 Z" stroke="#6E6E6E" stroke-width="0.9" fill="none"/><path d="M502 51.5 L505.5 51.5 L505.5 57.5 L510 57.5" stroke="#6E6E6E" stroke-width="0.9" fill="none"/><path d="M514 51.5 L517.5 51.5 L517.5 57.5 L520.5 57.5" stroke="#6E6E6E" stroke-width="0.9" fill="none"/><path d="M522.5 57.5 L520 56 L520 59 Z" fill="#6E6E6E"/><path d="M524.5 53 L528.5 53 L528.5 50.8 L533 54.7 L528.5 58.5 L528.5 56.3 L524.5 56.3 Z" stroke="#6E6E6E" stroke-width="0.9" fill="none"/><path d="M539 50.5 L542.5 50.5 L542.5 54.5 L545 54.5 L540.8 58.5 L536.5 54.5 L539 54.5 Z" stroke="#6E6E6E" stroke-width="0.9" fill="none"/><path d="M548.5 52.5 L551 50.5 L554 50.5 L557 53.5 L557 58 L548.5 58 Z" stroke="#6E6E6E" stroke-width="0.9" fill="none"/><path d="M491.5 62 L494 64.5 L492.5 65.5 L495.5 68" stroke="#6E6E6E" stroke-width="0.9" fill="none"/><path d="M494 69.8 L497 67.5 L494.5 66.5 Z" fill="#6E6E6E"/><path d="M502 63 Q509 63.5 510.5 69.5" stroke="#6E6E6E" stroke-width="0.9" fill="none"/><path d="M513.5 69 Q515.5 62 517.5 62.5 Q519.5 63 521.5 69.5" stroke="#6E6E6E" stroke-width="0.9" fill="none"/><path d="M530 62.5 Q527.5 65.8 530 69" stroke="#6E6E6E" stroke-width="0.9" fill="none"/><path d="M540.5 62.5 Q543 65.8 540.5 69" stroke="#6E6E6E" stroke-width="0.9" fill="none"/><path d="M553 62 L554.3 65 L557.5 65.2 L555 67.2 L555.8 70 L553 68.4 L550.2 70 L551 67.2 L548.5 65.2 L551.7 65 Z" stroke="#6E6E6E" stroke-width="0.9" fill="none"/></svg>
<svg class="r" style="left:574px;top:36px" width="18" height="19" viewBox="0 0 18 19"><rect x="2.5" y="3" width="12.5" height="12" fill="#EFC56A"/><rect x="1" y="1" width="7" height="7" fill="#FFFFFF" stroke="#8A8A8A" stroke-width="0.9"/><rect x="10.5" y="10" width="6.5" height="7.5" fill="#FFFFFF" stroke="#8A8A8A" stroke-width="0.9"/></svg>
<svg class="r" style="left:582px;top:69.5px" width="4" height="3" viewBox="0 0 4 3"><path d="M0.8 0.5 L3.2 0.5 L2 1.7 Z" fill="#555"/></svg>
<svg class="r" style="left:601px;top:37px" width="20" height="19" viewBox="0 0 20 19"><path d="M1.5 2 L14.5 2 Q16 2 16 3.5 L16 7 L9 16.5 L3 16.5 Q1.5 16.5 1.5 15 Z" fill="none" stroke="#C4C4C4" stroke-width="1"/><path d="M17 6 Q14 11 8.5 16.5" fill="none" stroke="#A8A8A8" stroke-width="1.8"/></svg>
<svg class="r" style="left:618.5px;top:70.5px" width="4" height="3" viewBox="0 0 4 3"><path d="M0.8999999999999999 0.5 L3.1 0.5 L2 1.6 Z" fill="#C0C0C0"/></svg>
<svg class="r" style="left:624px;top:36px" width="11" height="10" viewBox="0 0 11 10"><path d="M2 4 L5 1 L9 5 L5 8.5 Z" fill="none" stroke="#B4B4B4" stroke-width="0.9"/><path d="M1 0.5 L1 3" stroke="#B4B4B4" stroke-width="0.8"/><path d="M9.5 6 L9.5 7.5" stroke="#B4B4B4" stroke-width="1.2"/><rect x="1" y="8.6" width="8" height="1.2" fill="#CFE0CF"/></svg>
<svg class="r" style="left:666.5px;top:40.5px" width="4" height="3" viewBox="0 0 4 3"><path d="M0.8999999999999999 0.5 L3.1 0.5 L2 1.6 Z" fill="#C0C0C0"/></svg>
<svg class="r" style="left:624px;top:49px" width="11" height="9" viewBox="0 0 11 9"><rect x="0.5" y="1.5" width="7" height="6.5" fill="none" stroke="#B4B4B4" stroke-width="0.9"/><path d="M3.5 6 L9.5 0.8" stroke="#B4B4B4" stroke-width="1.3"/></svg>
<svg class="r" style="left:681.5px;top:53.5px" width="4" height="3" viewBox="0 0 4 3"><path d="M0.8999999999999999 0.5 L3.1 0.5 L2 1.6 Z" fill="#C0C0C0"/></svg>
<svg class="r" style="left:624px;top:62px" width="11" height="10" viewBox="0 0 11 10"><circle cx="5" cy="5" r="4" fill="#E0E0E0" stroke="#B4B4B4" stroke-width="0.9"/><path d="M3 7 L7.5 2.5" stroke="#FFFFFF" stroke-width="1.3"/></svg>
<svg class="r" style="left:678.5px;top:66.5px" width="4" height="3" viewBox="0 0 4 3"><path d="M0.8999999999999999 0.5 L3.1 0.5 L2 1.6 Z" fill="#C0C0C0"/></svg>
<svg class="r" style="left:693px;top:37px" width="10" height="9" viewBox="0 0 10 9"><circle cx="6" cy="3.4" r="2.4" fill="none" stroke="#4A7FA8" stroke-width="1.1"/><path d="M4.3 5.1 L1.2 8.2" stroke="#4A7FA8" stroke-width="1.5"/></svg>
<svg class="r" style="left:692px;top:50px" width="13" height="10" viewBox="0 0 13 10"><text x="1" y="4.8" font-family="Liberation Sans" font-size="5.6" fill="#555" stroke="#555" stroke-width="0.2">ab</text><text x="4.8" y="9.6" font-family="Liberation Sans" font-size="5.8" fill="#3A6E9A" stroke="#3A6E9A" stroke-width="0.2">ac</text><path d="M1.3 6 L1.3 8.2 L3.8 8.2" fill="none" stroke="#3A6E9A" stroke-width="0.9"/></svg>
<svg class="r" style="left:733.5px;top:53.5px" width="4" height="3" viewBox="0 0 4 3"><path d="M0.8 0.5 L3.2 0.5 L2 1.7 Z" fill="#666"/></svg>
<svg class="r" style="left:694px;top:63px" width="8" height="9" viewBox="0 0 8 9"><path d="M1 0.8 L1 7.8 L2.8 6 L4.3 8.6 L5.4 8 L4 5.5 L6.6 5.5 Z" fill="#FFFFFF" stroke="#8A8A8A" stroke-width="0.8"/></svg>
<svg class="r" style="left:723.5px;top:66.5px" width="4" height="3" viewBox="0 0 4 3"><path d="M0.8 0.5 L3.2 0.5 L2 1.7 Z" fill="#666"/></svg>
<svg class="r" style="left:788px;top:79.5px" width="7" height="5" viewBox="0 0 7 5"><path d="M0.8 4 L3.5 1.2 L6.2 4" fill="none" stroke="#555" stroke-width="1.1"/></svg>
<div class="t" style="left:8.00px;top:97.25px;font-size:7.5px;line-height:7.5px;letter-spacing:-0.350px;color:#6A6A6A;-webkit-text-stroke:0.15px #6A6A6A;transform-origin:0 6.35px;transform:scaleY(1.12);will-change:transform;-webkit-text-stroke:0;">1</div>
<div class="t" style="left:7.50px;top:116.25px;font-size:7.5px;line-height:7.5px;letter-spacing:-0.350px;color:#E06A5E;-webkit-text-stroke:0.15px #E06A5E;transform-origin:0 6.35px;transform:scaleY(1.12);will-change:transform;-webkit-text-stroke:0;">2</div>
<div class="t" style="left:7.50px;top:133.85px;font-size:7.5px;line-height:7.5px;letter-spacing:-0.350px;color:#6A6A6A;-webkit-text-stroke:0.15px #6A6A6A;transform-origin:0 6.35px;transform:scaleY(1.12);will-change:transform;-webkit-text-stroke:0;">3</div>
<div class="t" style="left:7.50px;top:151.85px;font-size:7.5px;line-height:7.5px;letter-spacing:-0.350px;color:#6A6A6A;-webkit-text-stroke:0.15px #6A6A6A;transform-origin:0 6.35px;transform:scaleY(1.12);will-change:transform;-webkit-text-stroke:0;">4</div>
<svg class="r" style="left:15.5px;top:98px" width="12" height="7" viewBox="0 0 12 7"><rect x="0.5" y="0.3" width="11" height="6" fill="#EEEAF0"/><path d="M1 2.2 L7 1.3 L10.5 2.5 L10.5 4.6 L7 3.8 L4 4.2 L2.5 5.8 L1 5.8 Z" fill="#231E1C"/><path d="M1.5 1.6 L7 0.8 L11 1.8" stroke="#E2D390" stroke-width="1.1" fill="none"/></svg>
<div class="r" style="left:14px;top:115px;width:14px;height:10px;background:#FFFFFF;box-shadow:inset 0 0 0 1.5px #DC6A58;"></div>
<div class="r" style="left:19.6px;top:118.8px;width:2.6px;height:1.6px;background:#4E8AB8;border-radius:1px;"></div>
<div class="r" style="left:16px;top:134.5px;width:11px;height:6.5px;background:#FFFFFF;box-shadow:0 0 0 0.6px #DDDDDD;"></div>
<div class="r" style="left:20.8px;top:137.2px;width:1.3px;height:1.3px;background:#8A8A8A;"></div>
<div class="r" style="left:16px;top:152.5px;width:11px;height:6.5px;background:#FFFFFF;box-shadow:0 0 0 0.6px #DDDDDD;"></div>
<div class="r" style="left:20.8px;top:155.2px;width:1.3px;height:1.3px;background:#8A8A8A;"></div>
<div class="r" style="left:33.5px;top:88px;width:1px;height:348px;background:#EBEBEB;"></div>
<svg class="r" style="left:0;top:0" width="800" height="450"><circle cx="415.8" cy="259.6" r="66.3" fill="#5B9BD5"/><g stroke="#6C92BA" stroke-width="1.3"><path d="M415.7 166 L415.7 184.5"/><path d="M415.7 334.5 L415.7 352.5"/><path d="M324 260 L342.6 260"/><path d="M488.4 260 L507 260"/></g><g fill="#567FA8"><path d="M415.7 163 L413.8 167.2 L417.6 167.2 Z"/><path d="M415.7 355.2 L413.8 351 L417.6 351 Z"/><path d="M321.5 260 L325.7 258.1 L325.7 261.9 Z"/><path d="M509.8 260 L505.6 258.1 L505.6 261.9 Z"/></g></svg>
<div class="r" style="left:791px;top:88px;width:9px;height:310px;background:#DBDBDB;"></div>
<div class="r" style="left:791px;top:89px;width:9px;height:8px;background:#FFFFFF;"></div>
<svg class="r" style="left:793px;top:91px" width="5" height="4" viewBox="0 0 5 4"><path d="M0.5 3 L2.5 0.5 L4.5 3 Z" fill="#666"/></svg>
<div class="r" style="left:790.5px;top:171px;width:9.5px;height:73px;background:#FFFFFF;box-shadow:inset 0 0 0 1px #D0D0D0;"></div>
<div class="r" style="left:791px;top:393px;width:9px;height:8px;background:#FFFFFF;"></div>
<svg class="r" style="left:793px;top:395.5px" width="5" height="4" viewBox="0 0 5 4"><path d="M0.5 0.5 L4.5 0.5 L2.5 3 Z" fill="#666"/></svg>
<svg class="r" style="left:792.5px;top:404px" width="5" height="6" viewBox="0 0 5 6"><path d="M0.5 2.5 L2.5 0.5 L4.5 2.5 Z M0.5 5.5 L2.5 3.5 L4.5 5.5 Z" fill="#666"/></svg>
<svg class="r" style="left:792.5px;top:414px" width="5" height="6" viewBox="0 0 5 6"><path d="M0.5 0.5 L2.5 2.5 L4.5 0.5 Z M0.5 3.5 L2.5 5.5 L4.5 3.5 Z" fill="#666"/></svg>
<svg class="r" style="left:48px;top:439px" width="9" height="8" viewBox="0 0 9 8"><rect x="0.5" y="0.5" width="5" height="6" fill="none" stroke="#777" stroke-width="0.9"/><path d="M5 4 L8 4 L8 7 L5 7" fill="none" stroke="#777" stroke-width="0.9"/></svg>
<svg class="r" style="left:503px;top:439px" width="7" height="8" viewBox="0 0 7 8"><path d="M0 3 L6 3 M0 5 L6 5 M0 7 L6 7 M3 0.5 L1.8 2 L4.2 2 Z" stroke="#777" stroke-width="0.8" fill="#777"/></svg>
<svg class="r" style="left:543px;top:439px" width="8" height="8" viewBox="0 0 8 8"><path d="M0.5 0.5 L7.5 0.5 L7.5 5 L3.5 5 L1.5 7 L1.5 5 L0.5 5 Z" fill="#6A6A6A"/></svg>
<div class="r" style="left:595.5px;top:436px;width:21.5px;height:14px;background:#D2D2D2;"></div>
<svg class="r" style="left:601px;top:439px" width="10" height="8" viewBox="0 0 10 8"><rect x="0.5" y="0.5" width="8.5" height="7" fill="none" stroke="#888" stroke-width="0.9"/><rect x="2.5" y="2" width="4.5" height="4" fill="#999"/></svg>
<svg class="r" style="left:624px;top:439px" width="10" height="8" viewBox="0 0 10 8"><rect x="0.5" y="0.5" width="3.5" height="3" fill="none" stroke="#777" stroke-width="0.8"/><rect x="5.5" y="0.5" width="3.5" height="3" fill="none" stroke="#777" stroke-width="0.8"/><rect x="0.5" y="4.5" width="3.5" height="3" fill="none" stroke="#777" stroke-width="0.8"/><rect x="5.5" y="4.5" width="3.5" height="3" fill="none" stroke="#777" stroke-width="0.8"/></svg>
<svg class="r" style="left:647px;top:439px" width="9" height="8" viewBox="0 0 9 8"><path d="M0.5 0.5 L4 1.2 L7.5 0.5 L7.5 7 L4 7.5 L0.5 7 Z M4 1.2 L4 7.5" fill="none" stroke="#777" stroke-width="0.9"/><rect x="1" y="1.2" width="2.8" height="5.8" fill="#999"/></svg>
<svg class="r" style="left:669px;top:439px" width="10" height="9" viewBox="0 0 10 9"><path d="M0.5 0.5 L9 0.5 M1 1.5 L8.5 1.5 L8.5 5 L1 5 Z M4.7 5 L4.7 8 M3 8 L6.5 8" fill="none" stroke="#777" stroke-width="0.9"/></svg>
<div class="r" style="left:688px;top:442.7px;width:2.5px;height:1px;background:#555;"></div>
<div class="r" style="left:693px;top:442.8px;width:60px;height:0.7px;background:#AAAAAA;"></div>
<div class="r" style="left:714px;top:440px;width:2.2px;height:6px;background:#555;"></div>
<svg class="r" style="left:753.5px;top:440px" width="6" height="6" viewBox="0 0 6 6"><path d="M0.5 3 L5 3 M2.75 0.5 L2.75 5.5" stroke="#555" stroke-width="1"/></svg>
<svg class="r" style="left:787.5px;top:438.5px" width="10" height="10" viewBox="0 0 10 10"><rect x="0.5" y="0.5" width="8.5" height="8.5" fill="none" stroke="#777" stroke-width="0.8"/><path d="M2 2 L3.8 2 M2 2 L2 3.8 M7.5 2 L5.7 2 M7.5 2 L7.5 3.8 M2 7.5 L3.8 7.5 M2 7.5 L2 5.7 M7.5 7.5 L5.7 7.5 M7.5 7.5 L7.5 5.7" stroke="#666" stroke-width="0.9"/></svg>
</body></html>
